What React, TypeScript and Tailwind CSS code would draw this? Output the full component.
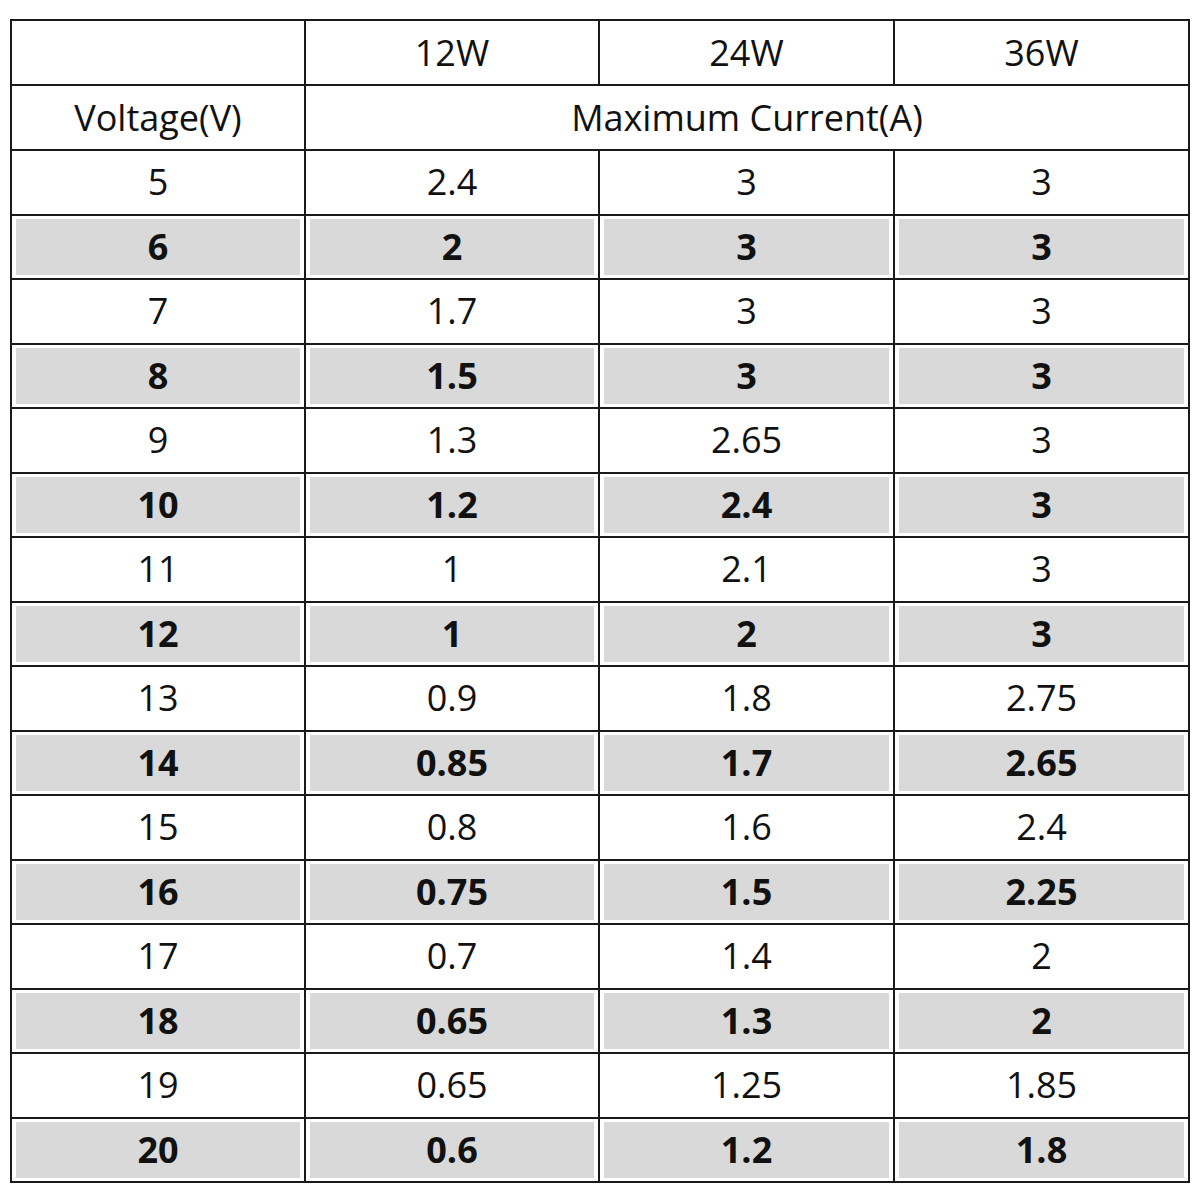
const rows: [string, string, string, string][] = [
  ['5', '2.4', '3', '3'],
  ['6', '2', '3', '3'],
  ['7', '1.7', '3', '3'],
  ['8', '1.5', '3', '3'],
  ['9', '1.3', '2.65', '3'],
  ['10', '1.2', '2.4', '3'],
  ['11', '1', '2.1', '3'],
  ['12', '1', '2', '3'],
  ['13', '0.9', '1.8', '2.75'],
  ['14', '0.85', '1.7', '2.65'],
  ['15', '0.8', '1.6', '2.4'],
  ['16', '0.75', '1.5', '2.25'],
  ['17', '0.7', '1.4', '2'],
  ['18', '0.65', '1.3', '2'],
  ['19', '0.65', '1.25', '1.85'],
  ['20', '0.6', '1.2', '1.8'],
];

const cell = 'border-2 border-[#1a1a1a] p-0 text-center align-middle';

export default function App() {
  return (
    <div className="w-[1200px] h-[1200px] bg-white pt-[19px] pl-[10px]" style={{ fontFamily: '"Open Sans", "Noto Sans", sans-serif' }}>
      <table className="border-collapse text-[36px] text-[#111] leading-none">
        <colgroup>
          <col className="w-[294px]" />
          <col className="w-[294px]" />
          <col className="w-[295px]" />
          <col className="w-[295px]" />
        </colgroup>
        <tbody>
          <tr className="h-[65px]">
            <td className={cell}></td>
            <td className={cell}>12W</td>
            <td className={cell}>24W</td>
            <td className={cell}>36W</td>
          </tr>
          <tr className="h-[65px]">
            <td className={cell}>Voltage(V)</td>
            <td className={cell} colSpan={3}>Maximum Current(A)</td>
          </tr>
          {rows.map((r, i) => {
            const shaded = i % 2 === 1;
            return (
              <tr key={r[0]} className="h-[64.5px]">
                {r.map((v, j) => (
                  <td key={j} className={cell}>
                    {shaded ? (
                      <div className="mx-[4px] my-[3px] h-[56px] bg-[#d9d9d9] flex items-center justify-center font-bold">{v}</div>
                    ) : (
                      v
                    )}
                  </td>
                ))}
              </tr>
            );
          })}
        </tbody>
      </table>
    </div>
  );
}
